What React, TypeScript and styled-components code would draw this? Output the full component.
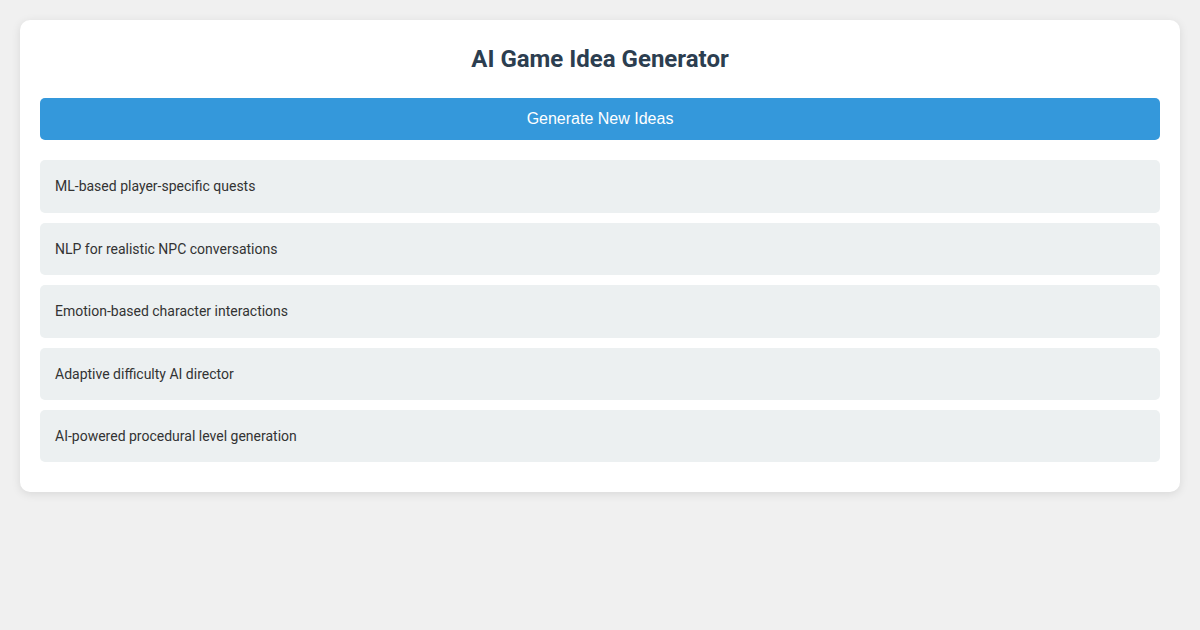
import React from "react"
import styled, { createGlobalStyle } from "styled-components"

const ideas = [
  "ML-based player-specific quests",
  "NLP for realistic NPC conversations",
  "Emotion-based character interactions",
  "Adaptive difficulty AI director",
  "AI-powered procedural level generation",
]

const GlobalStyle = createGlobalStyle`
  body {
    margin: 0;
    padding: 20px;
    background: #f0f0f0;
    font-family: Roboto, "Noto Sans", sans-serif;
    line-height: 1.6;
    color: #333;
  }
`

const Card = styled.div`
  background: white;
  border-radius: 10px;
  padding: 20px;
  box-shadow: 0 2px 10px rgba(0, 0, 0, 0.1);
`

const Title = styled.h1`
  margin: 0 0 20px;
  font-size: 24px;
  font-weight: 700;
  text-align: center;
  color: #2c3e50;
`

const GenerateButton = styled.button`
  display: block;
  width: 100%;
  padding: 12px;
  margin-bottom: 20px;
  border: none;
  border-radius: 5px;
  background: #3498db;
  color: white;
  font-family: "Liberation Sans", Arial, sans-serif;
  font-size: 16px;
  cursor: pointer;
`

const IdeaList = styled.ul`
  list-style: none;
  margin: 0;
  padding: 0;
`

const Idea = styled.li`
  background: #ecf0f1;
  border-radius: 5px;
  padding: 15px;
  margin-bottom: 10px;
  font-size: 14px;
`

const App: React.FC = () => (
  <>
    <GlobalStyle />
    <Card>
      <Title>AI Game Idea Generator</Title>
      <GenerateButton>Generate New Ideas</GenerateButton>
      <IdeaList>
        {ideas.map((idea) => (
          <Idea key={idea}>{idea}</Idea>
        ))}
      </IdeaList>
    </Card>
  </>
)

export default App
